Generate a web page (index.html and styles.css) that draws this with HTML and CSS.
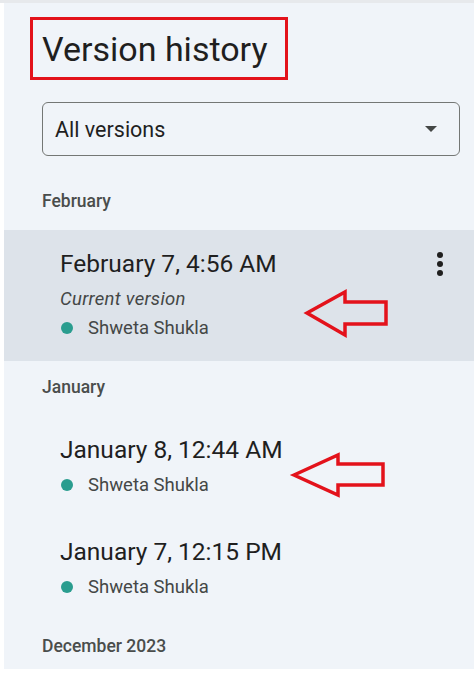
FILE: index.html
```html
<!DOCTYPE html>
<html lang="en">
<head>
<meta charset="utf-8">
<title>Version history</title>
<link rel="stylesheet" href="styles.css">
</head>
<body>
<div class="panel">
  <div class="header">
    <h1 class="title">Version history</h1>
  </div>
  <div class="select">
    <span class="select-label">All versions</span>
    <span class="caret"></span>
  </div>

  <div class="month month-first">February</div>
  <div class="row selected">
    <div class="row-title">February 7, 4:56 AM</div>
    <div class="row-sub">Current version</div>
    <div class="row-author"><span class="dot"></span>Shweta Shukla</div>
    <div class="kebab"><span></span><span></span><span></span></div>
  </div>

  <div class="month">January</div>
  <div class="row">
    <div class="row-title">January 8, 12:44 AM</div>
    <div class="row-author"><span class="dot"></span>Shweta Shukla</div>
  </div>
  <div class="row">
    <div class="row-title">January 7, 12:15 PM</div>
    <div class="row-author"><span class="dot"></span>Shweta Shukla</div>
  </div>

  <div class="month">December 2023</div>
</div>

<svg class="annot" width="474" height="673" viewBox="0 0 474 673" aria-hidden="true">
  <polygon points="307,313 345,292 345,302 386,302 386,324 345,324 345,335" fill="none" stroke="#e3121b" stroke-width="3.5" stroke-linejoin="miter"/>
  <polygon points="294,475 338,455 338,464 383,464 383,485 338,485 338,495" fill="none" stroke="#e3121b" stroke-width="3.5" stroke-linejoin="miter"/>
</svg>
</body>
</html>
```

FILE: styles.css
```css
* { box-sizing: border-box; }

html, body {
  margin: 0;
  padding: 0;
  background: #ffffff;
}

body {
  width: 474px;
  height: 673px;
  overflow: hidden;
  position: relative;
  font-family: Roboto, "Noto Sans", Arial, sans-serif;
  color: #1f1f1f;
  border-top: 3px solid #e7e9ec;
}

.panel {
  margin-left: 4px;
  height: 666px;
  overflow: hidden;
  background: #f0f4f9;
}

.header {
  padding: 14px 0 0 26px;
  display: flex;
}

.title {
  margin: 0;
  border: 3px solid #e3121b;
  padding: 0 17px 0 9px;
  height: 63px;
  display: flex;
  align-items: center;
  font-size: 34px;
  font-weight: 400;
  color: #1f1f1f;
}

.select {
  margin: 22px 14px 0 38px;
  height: 54px;
  border: 1px solid #747775;
  border-radius: 6px;
  display: flex;
  align-items: center;
  justify-content: space-between;
  padding: 0 22px 0 12px;
}

.select-label {
  font-size: 21.5px;
  color: #1f1f1f;
}

.caret {
  width: 0;
  height: 0;
  border-left: 6px solid transparent;
  border-right: 6px solid transparent;
  border-top: 6px solid #444746;
}

.month {
  padding: 16px 0 19px 38px;
  line-height: 20px;
  font-size: 17.5px;
  font-weight: 500;
  color: #4a4d4c;
}

.month-first {
  padding-top: 35px;
}

.row {
  position: relative;
  padding: 19px 0 21px 56px;
}

.row.selected {
  background: #dde3ea;
}

.row-title {
  line-height: 30px;
  font-size: 24.5px;
  color: #1f1f1f;
}

.row-sub {
  margin-top: 8px;
  line-height: 24px;
  font-size: 18.5px;
  letter-spacing: 0.3px;
  font-style: italic;
  color: #444746;
}

.row-author {
  margin-top: 8px;
  line-height: 24px;
  font-size: 18.5px;
  color: #444746;
  display: flex;
  align-items: center;
}

.row-sub + .row-author {
  margin-top: 5px;
}

.dot {
  width: 12px;
  height: 12px;
  border-radius: 50%;
  background: #2a9d8f;
  margin: 0 15px 0 1px;
}

.kebab {
  position: absolute;
  top: 22px;
  right: 31px;
  display: flex;
  flex-direction: column;
  gap: 3px;
}

.kebab span {
  width: 6px;
  height: 6px;
  border-radius: 50%;
  background: #1f1f1f;
}

.annot {
  position: absolute;
  left: 0;
  top: -3px;
  pointer-events: none;
}
```
